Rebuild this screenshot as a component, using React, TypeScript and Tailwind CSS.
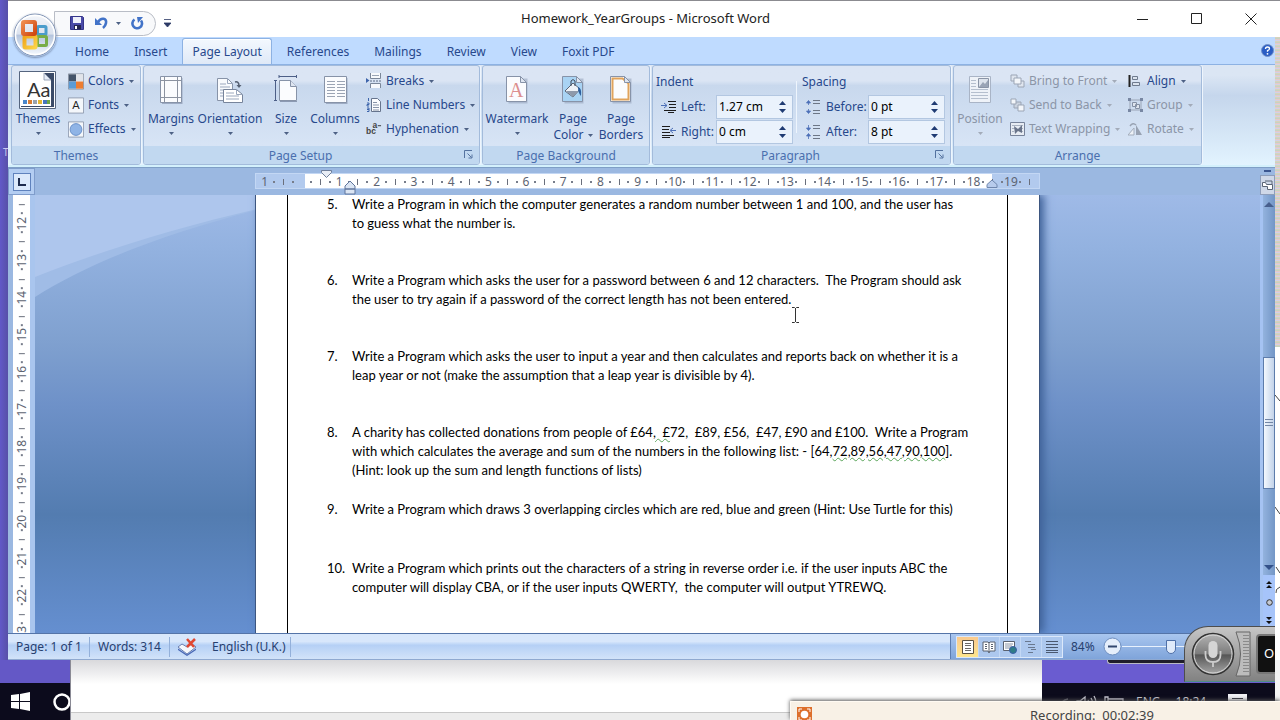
import type { ReactNode } from "react";

type Icon = ReactNode;

/* ---------- small drawings ---------- */

const Caret = ({ muted = false }: { muted?: boolean }) => (
  <svg width="5" height="3" viewBox="0 0 5 3" className="shrink-0">
    <path d="M0 0h5L2.5 3z" fill={muted ? "#a3abb9" : "#4d6185"} />
  </svg>
);

const OfficeLogo = () => (
  <svg width="44" height="44" viewBox="0 0 44 44">
    <defs>
      <linearGradient id="orb" x1="0" y1="0" x2="0" y2="1">
        <stop offset="0" stopColor="#f4f6fa" />
        <stop offset="0.48" stopColor="#dbe2ee" />
        <stop offset="0.5" stopColor="#b4c4dd" />
        <stop offset="1" stopColor="#f7fbff" />
      </linearGradient>
      <linearGradient id="orange" x1="0" y1="0" x2="1" y2="1">
        <stop offset="0" stopColor="#ee8a4c" />
        <stop offset="1" stopColor="#cf4712" />
      </linearGradient>
      <linearGradient id="yellow" x1="0" y1="0" x2="1" y2="1">
        <stop offset="0" stopColor="#f0a51a" />
        <stop offset="1" stopColor="#fbd348" />
      </linearGradient>
    </defs>
    <circle cx="22" cy="22" r="21" fill="url(#orb)" stroke="#7f92b3" />
    <circle cx="22" cy="22" r="19.5" fill="none" stroke="#fff" strokeWidth="1.5" />
    <g fill="none" strokeLinejoin="round">
      <rect x="24.5" y="13.500" width="8.500" height="8" rx="1" stroke="#4a9ccb" strokeWidth="3" />
      <rect x="24.500" y="23.500" width="9" height="9" rx="1" stroke="#78ad48" strokeWidth="3" />
      <rect x="11.500" y="23.500" width="11" height="11" rx="1" stroke="url(#yellow)" strokeWidth="4" />
      <rect x="10" y="9" width="12" height="12" rx="1" stroke="url(#orange)" strokeWidth="4" />
    </g>
  </svg>
);

const SaveIcon = () => (
  <svg width="14" height="14" viewBox="0 0 14 14">
    <path d="M.5.5h12l1 1v12H.5z" fill="#4a4ba8" stroke="#34358a" />
    <path d="M3 1h8v6H3z" fill="#eef0fb" />
    <path d="M4 9h7v4.500H4z" fill="#23244f" />
    <path d="M5 10h2v3H5z" fill="#fff" />
  </svg>
);

const UndoIcon = () => (
  <svg width="13" height="14" viewBox="0 0 13 14">
    <path d="M3 6C6 1 12 2 11 7q-.5 3-3 5" fill="none" stroke="#4273c8" strokeWidth="2.600" />
    <path d="M0 2v7h7z" fill="#4273c8" />
  </svg>
);

const RedoIcon = () => (
  <svg width="13" height="13" viewBox="0 0 13 13">
    <path d="M3.500 2.500a4.800 4.800 0 1 0 6.500 1" fill="none" stroke="#4273c8" strokeWidth="2.600" />
    <path d="M6 0h6L7 6z" fill="#4273c8" />
  </svg>
);

const Sheet = ({ fill = "#fbfcfe", children }: { fill?: string; children?: ReactNode }) => (
  <svg width="24" height="30" viewBox="0 0 24 30">
    <path d="M3.500 3.500h19v25h-19z" fill="#8593ad" opacity=".45" />
    <path d="M1.500 1.500h14l6 6v19h-20z" fill={fill} stroke="#8793a8" />
    {children}
    <path d="M15.500 1.500v6h6z" fill="#dfe6f1" stroke="#8793a8" />
  </svg>
);

const ThemesIcon = () => (
  <svg width="38" height="38" viewBox="0 0 38 38">
    <path d="M.5.5h36v37H.5z" fill="#fff" stroke="#55657f" />
    <path d="M25 2h10v34H2v-1h30V9z" fill="#3b4b68" />
    <path d="M25 2v7h7z" fill="#e6edf7" stroke="#8793a8" strokeWidth=".8" />
    <text x="8" y="26" fontSize="20" fontFamily="Lato, sans-serif" fill="#333">
      Aa
    </text>
    <path d="M4 29h4v4H4z" fill="#4b86c9" />
    <path d="M9 29h4v4H9z" fill="#d97d33" />
    <path d="M14 29h4v4h-4z" fill="#9aa3ae" />
    <path d="M19 29h4v4h-4z" fill="#e5b733" />
    <path d="M24 29h4v4h-4z" fill="#4775bd" />
    <path d="M28 29h3v4h-3z" fill="#6ca546" />
  </svg>
);

const ColorsIcon = () => (
  <svg width="19" height="19" viewBox="0 0 19 19">
    <path d="M.5.5h18v18H.5z" fill="#fff" stroke="#7d8898" />
    <path d="M1 1h8.500v8.500H1z" fill="#44546a" />
    <path d="M9.500 1H18v8.500H9.500z" fill="#e1e4ea" />
    <path d="M1 9.500h8.500V18H1z" fill="#5b9bd5" />
    <path d="M9.500 9.500H18V18H9.500z" fill="#ed7d31" />
  </svg>
);

const FontsIcon = () => (
  <svg width="19" height="19" viewBox="0 0 19 19">
    <path d="M.5.5h18v18H.5z" fill="#f4f7fb" stroke="#8793a8" />
    <text x="5" y="14" fontSize="13" fontFamily="Lato, sans-serif" fill="#222">
      A
    </text>
  </svg>
);

const EffectsIcon = () => (
  <svg width="19" height="19" viewBox="0 0 19 19">
    <path d="M.5.5h18v18H.5z" fill="#f4f7fb" stroke="#8793a8" />
    <circle cx="9.500" cy="9.500" r="7" fill="#8fb4e6" stroke="#5f88c4" />
  </svg>
);

const MarginsIcon = () => (
  <svg width="24" height="30" viewBox="0 0 24 30">
    <path d="M3 3h20.500v26H3z" fill="#7d8ba5" opacity=".6" />
    <path d="M1.500 1.500h21v26h-21z" fill="#fbfcfe" stroke="#8793a8" />
    <path d="M5.500 2v25M18.500 2v25M2 5.500h20M2 22.500h20" stroke="#8c93a0" />
  </svg>
);

const OrientationIcon = () => (
  <svg width="28" height="30" viewBox="0 0 28 30">
    <path d="M1.500 3.500h10l5 5v17h-15z" fill="#f8fafd" stroke="#8793a8" />
    <path d="M11.500 3.500v5h5M4 9h6M4 12h10M4 15h4M4 18h4M4 21h4" fill="none" stroke="#9aa7bd" />
    <path d="M19 7q4-1 4 4" fill="none" stroke="#556073" strokeWidth="1.500" />
    <path d="M20.500 10h5L23 13z" fill="#556073" />
    <path d="M7.500 14.500h13l6 5v8h-19z" fill="#fff" stroke="#77849b" />
    <path d="M20.500 14.500v5h6M10 18h8M10 21h13M10 24h13" fill="none" stroke="#9aa7bd" />
  </svg>
);

const SizeIcon = () => (
  <svg width="24" height="30" viewBox="0 0 24 30">
    <path d="M5 1.500h18M5 0v3M22.500 0v3M1.500 5v21M0 5.500h3M0 25.500h3" stroke="#4d5f87" />
    <path d="M5.500 5.500h11l6 6v14h-17z" fill="#fbfcfe" stroke="#8793a8" />
    <path d="M16.500 5.500v6h6" fill="#dfe6f1" stroke="#8793a8" />
    <path d="M6 26.500h17" stroke="#8b99b2" />
  </svg>
);

const ColumnsIcon = () => (
  <svg width="25" height="30" viewBox="0 0 25 30">
    <path d="M3 3h21.500v26H3z" fill="#7d8ba5" opacity=".6" />
    <path d="M1.500 1.500h22v26h-22z" fill="#fbfcfe" stroke="#8793a8" />
    <path
      d="M4 6.500h8M4 9.500h8M4 12.500h8M4 15.500h8M4 18.500h8M4 21.500h8M14 6.500h8M14 9.500h8M14 12.500h8M14 15.500h8M14 18.500h8M14 21.500h8"
      stroke="#9ba4b4"
    />
  </svg>
);

const BreaksIcon = () => (
  <svg width="16" height="16" viewBox="0 0 16 16">
    <path d="M4.500 0v5.500h10V0M4.500 15v-4.500h10V15" fill="#f7f9fc" stroke="#7b8799" />
    <path d="M6 2.500h7" stroke="#9aa5b5" />
    <path d="M4 8h11" stroke="#5a6a85" strokeDasharray="2 1" />
    <path d="M0 5l3.500 2.500L0 10z" fill="#3d64ab" />
  </svg>
);

const LineNumbersIcon = () => (
  <svg width="16" height="16" viewBox="0 0 16 16">
    <path d="M5.500 1.500h6l3 3v10h-9z" fill="#fbfcfe" stroke="#66748d" />
    <path d="M7 5.500h4M7 8h6M7 10.500h6M7 13h6" stroke="#8793a8" />
    <path d="M2.500 1v3M1 6h2v1.500H1V9h2M1 11h2v3.500H1M1 12.500h2" fill="none" stroke="#3d64ab" />
  </svg>
);

/* "bc" with a raised "a" and a hyphen, one run of text on two baselines */
const HyphenIcon = () => (
  <svg width="17" height="16" viewBox="0 0 17 16">
    <text x="0" y="13" fontSize="9" fontWeight="700" fontFamily="Liberation Sans, sans-serif" fill="#444">
      bc
      <tspan x="7" y="7">
        a
      </tspan>
    </text>
    <path d="M12.500 4.500h3.500" stroke="#333" />
  </svg>
);

const PositionIcon = () => (
  <svg width="24" height="30" viewBox="0 0 24 30">
    <path d="M1.500 1.500h21v26h-21z" fill="#eef2f8" stroke="#a9b4c6" />
    <path d="M3 5.500h5M3 8.500h5M3 11.500h5M3 14.500h17M3 17.500h17M3 20.500h17M3 23.500h17" stroke="#b5bfce" />
    <path d="M10.500 3.500h10v9h-10z" fill="#dde3ec" stroke="#8a94a6" />
    <path d="M11 12l4-5 2 2 3-4v7z" fill="#9aa4b5" />
  </svg>
);

const FrontIcon = () => (
  <svg width="15" height="14" viewBox="0 0 15 14" fill="#dfe5ee" stroke="#9ba5b5">
    <path d="M1 1h6v6H1zM8 7h6v6H8z" />
    <path d="M4 4h7v6H4z" fill="#f3f6fa" />
  </svg>
);

const BackIcon = () => (
  <svg width="15" height="14" viewBox="0 0 15 14" stroke="#9ba5b5">
    <path d="M4 4h7v6H4z" fill="#cbd3df" />
    <path d="M1 1h5v5H1zM8 7h6v6H8z" fill="#f3f6fa" />
  </svg>
);

const WrapIcon = () => (
  <svg width="15" height="14" viewBox="0 0 15 14">
    <path d="M.5.500h14v13H.5z" fill="#e7ecf3" stroke="#77839a" />
    <path d="M2 3.500h11M2 6.500h3M10 6.500h3M2 9.500h2M11 9.500h2" stroke="#a9b2c1" />
    <path d="M4 4l4 3 4-4v8l-4-2-3 3z" fill="#69748a" />
  </svg>
);

const AlignIcon = () => (
  <svg width="14" height="14" viewBox="0 0 14 14">
    <path d="M1.500 1v12" stroke="#222" strokeWidth="2" />
    <path d="M4.500 2.500h5v3h-5zM4.500 8.500h7v3h-7z" fill="#dbe3ee" stroke="#6f7b8e" />
  </svg>
);

const GroupIcon = () => (
  <svg width="15" height="14" viewBox="0 0 15 14">
    <path d="M2 2h11v10H2z" fill="none" stroke="#9aa4b5" />
    <path d="M4.500 4.500h4v4h-4zM7.500 6.500h4v4h-4z" fill="#dfe5ee" stroke="#8490a4" />
    <path d="M0 0h3v3H0zM12 0h3v3h-3zM0 11h3v3H0zM12 11h3v3h-3z" fill="#7887a3" />
  </svg>
);

const RotateIcon = () => (
  <svg width="15" height="14" viewBox="0 0 15 14">
    <path d="M8 3v10h6z" fill="#98a2b2" />
    <path d="M6 6v7H0z" fill="#eef2f7" stroke="#a3adbc" />
    <path d="M2 4q3-4 6-1" fill="none" stroke="#98a2b2" strokeWidth="1.500" />
  </svg>
);

const IndentIcon = ({ right = false }: { right?: boolean }) => (
  <svg width="16" height="14" viewBox="0 0 16 14">
    {right ? (
      <>
        <path d="M1 1.500h8M1 4.500h7M1 7.500h8M1 10.500h12M1 12.500h8" stroke="#1d1d1d" />
        <path d="M15 5.500h-5M12 3l-3 2.500L12 8" fill="none" stroke="#4d70b8" />
      </>
    ) : (
      <>
        <path d="M7 1.500h8M8 4.500h7M8 7.500h7M3 10.500h12M7 12.500h6" stroke="#1d1d1d" />
        <path d="M0 5.500h6M3 3l3 2.500L3 8" fill="none" stroke="#4d70b8" />
      </>
    )}
  </svg>
);

const SpacingIcon = ({ after = false }: { after?: boolean }) => (
  <svg width="15" height="16" viewBox="0 0 15 16">
    <path d="M7 1.500h7M7 4.500h7M7 11.500h7M7 14.500h7" stroke="#6c7686" />
    {after ? (
      <path d="M2.500 1v3M2.500 15v-3M.5 4h4l-2 2.500zM.5 12h4l-2-2.500z" fill="#4d70b8" stroke="#4d70b8" strokeWidth=".8" />
    ) : (
      <path d="M2.500 6V4M2.500 10v2M.5 4h4l-2-2.500zM.5 12h4l-2 2.500z" fill="#4d70b8" stroke="#4d70b8" strokeWidth=".8" />
    )}
  </svg>
);

/* ---------- ribbon parts ---------- */

interface GroupProps {
  title: string;
  className: string;
  launcher?: boolean;
  children: ReactNode;
}

const RibbonGroup = ({ title, className, launcher, children }: GroupProps) => (
  <section
    className={`${className} flex shrink-0 flex-col rounded-[3px] border border-[#a3bbdb] bg-linear-to-b from-[#dbe5f4] from-15% via-[#c8d8ed] via-20% to-[#dce8f8] shadow-[1px_0_0_#eef5fd]`}
  >
    <div className="flex h-20 pl-px pt-[3px]">{children}</div>
    <div
      className={`relative flex h-[18px] items-center justify-center rounded-b-[2px] bg-[#c1d8f0] pt-[2px] text-[#4a6fae] ${launcher ? "pr-[22px]" : ""}`}
    >
      <h2>{title}</h2>
      {launcher && (
        <button aria-label={`${title} options`} className="absolute right-[6px] top-1">
          <svg width="9" height="9" viewBox="0 0 9 9" fill="none" stroke="#54729f">
            <path d="M.5 8V.5H8M3.500 3.500l4 4M8 4.500V8H4.500" />
          </svg>
        </button>
      )}
    </div>
  </section>
);

interface BigProps {
  icon: Icon;
  lines: string[];
  className: string;
  muted?: boolean;
  caret?: boolean;
}

const BigButton = ({ icon, lines, className, muted, caret = true }: BigProps) => (
  <button className={`${className} flex h-[76px] shrink-0 flex-col items-center leading-4 ${muted ? "text-[#8b95a7]" : ""}`}>
    <span className="flex h-[42px] items-center">{icon}</span>
    {lines.map((line, i) => (
      <span key={line} className="flex items-center gap-1 whitespace-nowrap">
        {line}
        {caret && i > 0 && <Caret />}
      </span>
    ))}
    {lines.length === 1 && (
      <span className="flex h-3 items-center">
        <Caret muted={muted} />
      </span>
    )}
  </button>
);

const SmallButton = ({ icon, label, muted }: { icon: Icon; label: string; muted?: boolean }) => (
  <button className={`flex h-6 items-center gap-1 whitespace-nowrap ${muted ? "text-[#8b95a7]" : ""}`}>
    <span className="flex w-4 shrink-0 justify-center">{icon}</span>
    {label}
    <span className="pl-px">
      <Caret muted={muted} />
    </span>
  </button>
);

const Spinner = ({ id, icon, label, value, wide }: { id: string; icon: Icon; label: string; value: string; wide?: boolean }) => (
  <div className="flex h-[25px] items-center">
    <span className="w-5">{icon}</span>
    <label htmlFor={id} className={wide ? "w-[42px]" : "w-[35px]"}>
      {label}
    </label>
    <span className="flex h-6 w-[77px] items-center border border-[#b3c7e1] bg-[#eaf2fc] pr-[6px]">
      <input id={id} defaultValue={value} className="min-w-0 flex-1 bg-transparent pl-[2px] text-black outline-none" />
      <span className="flex flex-col gap-1">
        <button aria-label={`Increase ${label}`}>
          <svg width="7" height="4" viewBox="0 0 7 4" className="block">
            <path d="M0 4h7L3.500 0z" fill="#1f3b73" />
          </svg>
        </button>
        <button aria-label={`Decrease ${label}`}>
          <svg width="7" height="4" viewBox="0 0 7 4" className="block">
            <path d="M0 0h7L3.500 4z" fill="#1f3b73" />
          </svg>
        </button>
      </span>
    </span>
  </div>
);

/* ---------- rulers ---------- */

const mark = (n: number, offset: number) => {
  const q = ((n % 4) + 4) % 4;
  if (q === 0) return n === 0 ? "" : String(Math.abs(n) / 4 + offset);
  return q === 2 ? "|" : "·";
};

const horizontalMarks = Array.from({ length: 83 }, (_, i) => mark(i - 4, 0));
const verticalMarks = Array.from({ length: 47 }, (_, i) => (i === 2 ? "12" : mark(i - 2, 12)));

const Mark = ({ value }: { value: string }) =>
  value === "|" ? (
    <span className="h-[6px] w-px bg-[#6a6f7c]" />
  ) : value === "·" ? (
    <span className="size-[2px] bg-[#777d8b]" />
  ) : (
    <span>{value}</span>
  );

/* ---------- document ---------- */

const Squiggle = ({ children }: { children: string }) => (
  <span className="underline decoration-[#5aa55a] decoration-wavy decoration-1 underline-offset-1">{children}</span>
);

const questions: { no: string; gap: string; lines: ReactNode[] }[] = [
  {
    no: "5.",
    gap: "mb-[38px]",
    lines: [
      "Write a Program in which the computer generates a random number between 1 and 100, and the user has",
      "to guess what the number is.",
    ],
  },
  {
    no: "6.",
    gap: "mb-[38px]",
    lines: [
      "Write a Program which asks the user for a password between 6 and 12 characters.  The Program should ask",
      "the user to try again if a password of the correct length has not been entered.",
    ],
  },
  {
    no: "7.",
    gap: "mb-[38px]",
    lines: [
      "Write a Program which asks the user to input a year and then calculates and reports back on whether it is a",
      "leap year or not (make the assumption that a leap year is divisible by 4).",
    ],
  },
  {
    no: "8.",
    gap: "mb-5",
    lines: [
      <>
        A charity has collected donations from people of £64<Squiggle>{",  £"}</Squiggle>
        {"72,  £89, £56,  £47, £90 and £100.  Write a Program"}
      </>,
      <>
        with which calculates the average and sum of the numbers in the following list: - [64,
        <Squiggle>72,89,56,47,90,100</Squiggle>].
      </>,
      "(Hint: look up the sum and length functions of lists)",
    ],
  },
  {
    no: "9.",
    gap: "mb-10",
    lines: ["Write a Program which draws 3 overlapping circles which are red, blue and green (Hint: Use Turtle for this)"],
  },
  {
    no: "10.",
    gap: "",
    lines: [
      "Write a Program which prints out the characters of a string in reverse order i.e. if the user inputs ABC the",
      "computer will display CBA, or if the user inputs QWERTY,  the computer will output YTREWQ.",
    ],
  },
];

const tabs = ["Home", "Insert", "Page Layout", "References", "Mailings", "Review", "View", "Foxit PDF"];

/* ---------- window sections ---------- */

const TitleBar = () => (
  <header className="relative flex h-[37px] shrink-0 items-center border-t border-[#8b8b90] bg-white">
    <div className="absolute left-[5px] top-3 z-10">
      <button aria-label="Office button" className="block rounded-full shadow-[0_1px_2px_#7b8eae]">
        <OfficeLogo />
      </button>
    </div>
    <div className="mt-2 ml-[46px] flex h-[25px] w-[102px] items-center rounded-r-full border border-[#b9bdc6] bg-[#f8f9fb] pl-[15px]">
      <button aria-label="Save">
        <SaveIcon />
      </button>
      <button aria-label="Undo" className="ml-[11px] flex items-center gap-2">
        <UndoIcon />
        <Caret />
      </button>
      <button aria-label="Repeat" className="ml-[10px]">
        <RedoIcon />
      </button>
    </div>
    <button aria-label="Customize toolbar" className="mt-2 ml-2">
      <svg width="7" height="8" viewBox="0 0 7 8">
        <path d="M0 .5h7M0 4h7L3.500 8z" fill="#2c3a66" stroke="#2c3a66" strokeWidth=".8" />
      </svg>
    </button>
    <h1 className="flex-1 pl-[350px] text-[13px] text-[#222]">Homework_YearGroups - Microsoft Word</h1>
    <div className="flex items-center gap-[43px] pr-[18px]">
      <button aria-label="Minimize" className="pb-px">
        <svg width="11" height="12" viewBox="0 0 11 12">
          <path d="M0 6.500h11" stroke="#222" />
        </svg>
      </button>
      <button aria-label="Maximize">
        <svg width="11" height="12" viewBox="0 0 11 12">
          <path d="M.5.500h10v10H.5z" fill="none" stroke="#222" />
        </svg>
      </button>
      <button aria-label="Close">
        <svg width="12" height="12" viewBox="0 0 12 12">
          <path d="M.5.500l11 11M11.500.500l-11 11" stroke="#222" />
        </svg>
      </button>
    </div>
  </header>
);

const TabStrip = () => (
  <nav className="flex h-[27px] shrink-0 items-end gap-[5px] bg-[#bfdbff] pl-[57px]">
    {tabs.map((tab) => (
      <a
        key={tab}
        href="#"
        aria-current={tab === "Page Layout" ? "page" : undefined}
        className={
          tab === "Page Layout"
            ? "flex h-[26px] items-center rounded-t-[3px] border border-b-0 border-[#8db2e3] bg-linear-to-b from-[#f3f8fe] to-[#dfe9f7] px-[9px] shadow-[inset_0_1px_0_#fff]"
            : "flex h-[26px] items-center px-[10px] pt-px"
        }
      >
        {tab}
      </a>
    ))}
    <button aria-label="Help" className="mr-px mb-[7px] ml-auto">
      <svg width="13" height="13" viewBox="0 0 13 13">
        <circle cx="6.500" cy="6.500" r="6" fill="#2a5dc4" stroke="#7290c8" />
        <path d="M4.500 5q0-2 2-2t2 1.700q0 1-2 2v1" fill="none" stroke="#fff" strokeWidth="1.300" />
        <circle cx="6.500" cy="9.800" r=".9" fill="#fff" />
      </svg>
    </button>
  </nav>
);

const Ribbon = () => (
  <div className="flex h-[104px] shrink-0 items-start gap-[2px] border-t border-b border-t-[#8db2e3] border-b-[#7f9fc6] bg-linear-to-b from-[#dbe6f4] from-10% via-[#c5d6ec] via-30% to-[#e3f4ff] pl-[3px] shadow-[inset_0_-2px_0_#d3f0fc]">
    <RibbonGroup title="Themes" className="w-[130px]">
      <BigButton className="w-[50px]" icon={<ThemesIcon />} lines={["Themes"]} />
      <div className="pl-[5px]">
        <SmallButton icon={<ColorsIcon />} label="Colors" />
        <SmallButton icon={<FontsIcon />} label="Fonts" />
        <SmallButton icon={<EffectsIcon />} label="Effects" />
      </div>
    </RibbonGroup>

    <RibbonGroup title="Page Setup" className="w-[337px]" launcher>
      <BigButton className="w-[52px]" icon={<MarginsIcon />} lines={["Margins"]} />
      <BigButton className="w-[66px]" icon={<OrientationIcon />} lines={["Orientation"]} />
      <BigButton className="w-[46px]" icon={<SizeIcon />} lines={["Size"]} />
      <BigButton className="w-[52px]" icon={<ColumnsIcon />} lines={["Columns"]} />
      <div className="pl-[5px]">
        <SmallButton icon={<BreaksIcon />} label="Breaks" />
        <SmallButton icon={<LineNumbersIcon />} label="Line Numbers" />
        <SmallButton icon={<HyphenIcon />} label="Hyphenation" />
      </div>
    </RibbonGroup>

    <RibbonGroup title="Page Background" className="w-[168px]">
      <BigButton
        className="w-[66px]"
        lines={["Watermark"]}
        icon={
          <Sheet>
            <text x="4" y="22" fontSize="20" fontFamily="Liberation Serif, serif" fill="#dc8f8f">
              A
            </text>
          </Sheet>
        }
      />
      <BigButton
        className="w-[46px]"
        lines={["Page", "Color"]}
        icon={
          <Sheet fill="#a9d3f3">
            <path d="M4 16l8-8 7 6-7 8z" fill="#eef2f7" stroke="#5a6475" />
            <path d="M5 16h13l-6 6z" fill="#8d99ab" />
            <path d="M10 11V6q2-3 4 0v5" fill="none" stroke="#3f4858" />
            <path d="M17 12q4 1 3 9-3-3-3-9z" fill="#2c5f9e" />
          </Sheet>
        }
      />
      <BigButton
        className="w-[50px]"
        lines={["Page", "Borders"]}
        caret={false}
        icon={
          <Sheet>
            <path d="M3.500 3.500h10l6 5v16h-16z" fill="none" stroke="#e0a35c" strokeWidth="2" />
          </Sheet>
        }
      />
    </RibbonGroup>

    <RibbonGroup title="Paragraph" className="w-[299px]" launcher>
      <div className="w-[142px] pl-[2px] pt-1">
        <h3 className="h-[21px]">Indent</h3>
        <div className="pl-[5px]">
          <Spinner id="indent-left" icon={<IndentIcon />} label="Left:" value="1.27 cm" />
          <Spinner id="indent-right" icon={<IndentIcon right />} label="Right:" value="0 cm" />
        </div>
      </div>
      <div className="mt-3 h-[52px] w-px bg-[#eef5fd]" />
      <div className="pl-[5px] pt-1">
        <h3 className="h-[21px]">Spacing</h3>
        <div className="pl-1">
          <Spinner id="space-before" icon={<SpacingIcon />} label="Before:" value="0 pt" wide />
          <Spinner id="space-after" icon={<SpacingIcon after />} label="After:" value="8 pt" wide />
        </div>
      </div>
    </RibbonGroup>

    <RibbonGroup title="Arrange" className="w-[249px]">
      <BigButton className="w-[50px]" icon={<PositionIcon />} lines={["Position"]} muted />
      <div className="w-[122px] pl-1">
        <SmallButton icon={<FrontIcon />} label="Bring to Front" muted />
        <SmallButton icon={<BackIcon />} label="Send to Back" muted />
        <SmallButton icon={<WrapIcon />} label="Text Wrapping" muted />
      </div>
      <div>
        <SmallButton icon={<AlignIcon />} label="Align" />
        <SmallButton icon={<GroupIcon />} label="Group" muted />
        <SmallButton icon={<RotateIcon />} label="Rotate" muted />
      </div>
    </RibbonGroup>
  </div>
);

const RulerRow = () => (
  <div className="flex h-[27px] shrink-0 bg-[#9bb8e1]">
    <div className="flex w-[27px] items-center justify-center border border-[#7f9ccb] bg-[#b3cdf2]">
      <button aria-label="Left tab" className="flex size-[18px] items-center justify-center border border-[#5f82bd] bg-[#dce9fb]">
        <svg width="8" height="8" viewBox="0 0 8 8">
          <path d="M1 0v7h7" fill="none" stroke="#1e2b4d" strokeWidth="2" />
        </svg>
      </button>
    </div>
    <div className="flex flex-1 justify-center">
      <div className="relative mt-[5px] flex h-4 w-[785px] border border-[#c3d7f4] bg-[#b2caee] text-[#5d6472]">
        <div className="absolute inset-y-0 left-[49px] w-[687px] bg-white" />
        <div className="relative flex min-w-0 flex-1 pt-px pr-[5px] pl-1">
          {horizontalMarks.map((value, i) => (
            <span key={i} className="flex w-0 flex-1 items-center justify-center leading-none">
              <Mark value={value} />
            </span>
          ))}
        </div>
        <svg className="absolute -top-1 left-[65px]" width="11" height="8" viewBox="0 0 11 8">
          <path d="M.5.500h10v2l-5 5-5-5z" fill="#e8edf5" stroke="#6f7f9b" />
        </svg>
        <svg className="absolute top-[6px] left-[88px]" width="12" height="15" viewBox="0 0 12 15">
          <path d="M1 6l5-5 5 5v3H1zM1 9h10v5H1z" fill="#dbe5f3" stroke="#5f759c" />
        </svg>
        <svg className="absolute top-[5px] left-[730px]" width="12" height="9" viewBox="0 0 12 9">
          <path d="M1 5.500L6 1l5 4.500v3H1z" fill="#b7cbec" stroke="#6f86ad" />
        </svg>
      </div>
    </div>
    <div className="flex w-[15px] flex-col justify-between">
      <span className="mx-1 mt-[2px] h-[2px] bg-[#3b5690]" />
      <button aria-label="View ruler" className="flex h-[20px] items-center justify-center border border-[#8e9ebb] bg-[#cfd8e8]">
        <svg width="11" height="11" viewBox="0 0 11 11">
          <path d="M.5 2.500h3l1 2h6v5h-5v-3h-5z" fill="#fff" stroke="#5a6475" />
          <path d="M3 1h7v3" fill="none" stroke="#5a6475" />
        </svg>
      </button>
    </div>
  </div>
);

const ScrollBar = () => (
  <div className="flex w-[15px] shrink-0 flex-col border-l-[3px] border-[#a5c3f2] bg-linear-to-r from-[#93b3de] to-[#7396c6]">
    <button aria-label="Scroll up" className="flex h-[18px] items-center justify-center">
      <svg width="10" height="5" viewBox="0 0 10 5">
        <path d="M0 5h10L5 0z" fill="#475f8e" />
      </svg>
    </button>
    <div className="flex-[145]" />
    <div className="flex flex-[131] items-center justify-center border border-[#5d7cab] bg-linear-to-r from-[#f3f8fe] to-[#c3d3e9]">
      <svg width="8" height="8" viewBox="0 0 8 8">
        <path d="M0 .5h8M0 3.500h8M0 6.500h8" stroke="#7386a5" />
      </svg>
    </div>
    <div className="flex-[71]" />
    <button aria-label="Scroll down" className="flex h-4 items-center justify-center">
      <svg width="10" height="5" viewBox="0 0 10 5">
        <path d="M0 0h10L5 5z" fill="#33518a" />
      </svg>
    </button>
    <div className="flex h-[58px] flex-col items-center gap-[11px] bg-[#a6c4fa] pt-[5px]">
      <svg width="6" height="8" viewBox="0 0 6 8" className="shrink-0">
        <path d="M0 4h6L3 1zM0 8h6L3 5z" fill="#111" />
      </svg>
      <svg width="7" height="7" viewBox="0 0 7 7" className="shrink-0">
        <circle cx="3.500" cy="3.500" r="2.800" fill="#c5c9d2" stroke="#333" />
      </svg>
      <svg width="6" height="8" viewBox="0 0 6 8" className="shrink-0">
        <path d="M0 0h6L3 3zM0 4h6L3 7z" fill="#111" />
      </svg>
    </div>
  </div>
);

const Workspace = () => (
  <div className="relative flex min-h-0 flex-1">
    <div className="flex w-[27px] shrink-0 overflow-hidden border-r-[5px] border-[#a9c5ee] bg-[#9bb8e1] pl-[5px]">
      <div className="flex w-[17px] shrink-0 bg-white text-[#5d6472]">
        <div className="mt-[5px] flex h-full w-full flex-col">
          {verticalMarks.map((value, i) => (
            <span key={i} className="flex h-0 flex-1 -rotate-90 items-center justify-center leading-none">
              <Mark value={value} />
            </span>
          ))}
        </div>
      </div>
    </div>

    <main className="relative flex min-w-0 flex-1 justify-center overflow-hidden bg-[linear-gradient(#9fbae7,#93b2e0_12%,#7fa0cf_34%,#6e91c8_48%,#537cb0_73%,#658fd0)]">
      <svg className="absolute top-0 left-0" width="222" height="102" viewBox="0 0 222 102">
        <path d="M0 0h222v15C140 36 60 64 0 102z" fill="#a0bce6" />
        <path d="M0 0h222v14C140 33 60 58 0 82z" fill="#aec6ed" />
      </svg>
      <article className="relative w-[785px] border-r border-l border-[#3d5680] bg-white shadow-[4px_0_8px_#40639a]">
        <div className="ml-[31px] h-full w-[721px] border-x border-black">
          <ol className="pl-[39px] font-['Lato',sans-serif] text-[13px] leading-[19px] text-black [font-variant-ligatures:none]">
            {questions.map(({ no, gap, lines }) => (
              <li key={no} className={`${gap} flex`}>
                <span className="w-[25px] shrink-0">{no}</span>
                <p className="whitespace-pre">
                  {lines.map((line, i) => (
                    <span key={i} className="block">
                      {line}
                    </span>
                  ))}
                </p>
              </li>
            ))}
          </ol>
        </div>
        <svg className="absolute top-[112px] left-[535px]" width="9" height="16" viewBox="0 0 9 16">
          <path d="M1 .5h2.500l1 1 1-1H8M4.500 1v14M1 15.500h2.500l1-1 1 1H8" fill="none" stroke="#333" />
        </svg>
      </article>
    </main>
    <ScrollBar />
  </div>
);

const viewButtons: { label: string; icon: Icon }[] = [
  {
    label: "Print layout",
    icon: (
      <>
        <path d="M1.500.500h11v13h-11z" fill="#fff" stroke="#5a5142" />
        <path d="M4 3.500h6M4 5.500h6M4 8.500h6M4 10.500h6" stroke="#6a6a6a" />
      </>
    ),
  },
  {
    label: "Full screen reading",
    icon: (
      <>
        <path d="M1 2h5l1 1 1-1h5v9H8l-1 2-1-2H1z" fill="#fff" stroke="#59616f" />
        <path d="M7 3v9M3 4.500h2M3 6.500h2M3 8.500h2M9 4.500h2M9 6.500h2M9 8.500h2" stroke="#59616f" />
      </>
    ),
  },
  {
    label: "Web layout",
    icon: (
      <>
        <path d="M.5 1.500h11v9H.5z" fill="#fff" stroke="#59616f" />
        <path d="M2 4h8M2 6h7M2 8h5" stroke="#8b95a5" />
        <circle cx="10" cy="10" r="3.500" fill="#2f7c86" stroke="#3a5ea8" />
      </>
    ),
  },
  { label: "Outline", icon: <path d="M1 1.500h6M4 4.500h7M4 7.500h7M7 9.500h5M4 12.500h5" stroke="#69788f" /> },
  { label: "Draft", icon: <path d="M1 1.500h12M1 4.500h12M1 7.500h12M1 10.500h12M1 12.500h12" stroke="#4a586f" /> },
];

const StatusBar = () => (
  <footer className="flex h-[27px] shrink-0 items-center border-t border-b border-t-[#5474a8] border-b-[#8fa9d0] bg-linear-to-b from-[#d8e7fb] from-30% via-[#b5d0f5] via-45% to-[#d2e3f9] text-[#27406f]">
    <span className="flex h-5 w-[82px] items-center border-r border-[#93b0da] pl-2">Page: 1 of 1</span>
    <span className="flex h-5 w-20 items-center border-r border-[#93b0da] pl-2">Words: 314</span>
    <button aria-label="Proofing errors" className="ml-[7px]">
      <svg width="20" height="18" viewBox="0 0 20 18">
        <path d="M1 9l4-3 5 3 5-3 4 3-9 7z" fill="#f5f7fb" stroke="#6b7fb0" />
        <path d="M1 10.500l9 6 9-6v1.500l-9 6-9-6z" fill="#4867b4" />
        <path d="M10 1l7 8M18 1l-8 8" stroke="#e04832" strokeWidth="2.500" />
      </svg>
    </button>
    <span className="ml-[15px] flex h-5 w-[79px] items-center border-r border-[#93b0da] whitespace-nowrap">English (U.K.)</span>
    <div className="ml-auto flex h-full w-[325px] items-center border-l border-[#5c7cb0] bg-linear-to-b from-[#a9c6ef] to-[#7fa4da] pl-[5px]">
      <div className="flex border border-[#dbe8fa]">
        {viewButtons.map(({ label, icon }, i) => (
          <button
            key={label}
            aria-label={label}
            className={
              i === 0
                ? "flex h-5 w-[21px] items-center justify-center bg-linear-to-b from-[#f9c98e] to-[#fde58e]"
                : "flex h-5 w-[21px] items-center justify-center border-l border-[#c3d8f5] bg-[#adc8ee]"
            }
          >
            <svg width="14" height="14" viewBox="0 0 14 14" fill="none">
              {icon}
            </svg>
          </button>
        ))}
      </div>
      <span className="w-[31px] pl-2">84%</span>
      <button aria-label="Zoom out" className="ml-[9px] shrink-0">
        <svg width="19" height="19" viewBox="0 0 19 19">
          <circle cx="9.500" cy="9.500" r="8.500" fill="#e5eefb" stroke="#6f8fc0" />
          <path d="M5 9.500h9" stroke="#33486f" strokeWidth="2" />
        </svg>
      </button>
      <input
        type="range"
        aria-label="Zoom"
        defaultValue={49}
        className="h-5 w-[100px] appearance-none bg-[linear-gradient(#e8f1fd,#e8f1fd)] bg-[length:100%_1px] bg-center bg-no-repeat [&::-webkit-slider-thumb]:h-[14px] [&::-webkit-slider-thumb]:w-[10px] [&::-webkit-slider-thumb]:appearance-none [&::-webkit-slider-thumb]:rounded-b-[5px] [&::-webkit-slider-thumb]:border [&::-webkit-slider-thumb]:border-[#4f70a8] [&::-webkit-slider-thumb]:bg-[#dfeafa]"
      />
    </div>
  </footer>
);

const Taskbar = () => (
  <div className="flex h-[60px] shrink-0 overflow-hidden text-[#c9c9d3]">
    <div className="flex w-[70px] shrink-0 flex-col">
      <div className="h-[23px] bg-[#6458c6]" />
      <div className="flex flex-1 items-center gap-[23px] overflow-hidden bg-[#0c0b1c] pl-[11px]">
        <button aria-label="Start">
          <svg width="19" height="19" viewBox="0 0 19 19" fill="#fff">
            <path d="M0 3l8-1v7H0zM9 2l10-2v9H9zM0 10h8v7l-8-1zM9 10h10v9L9 17z" />
          </svg>
        </button>
        <button aria-label="Search" className="shrink-0">
          <svg width="18" height="18" viewBox="0 0 18 18">
            <circle cx="9" cy="9" r="7.500" fill="none" stroke="#fff" strokeWidth="2.500" />
          </svg>
        </button>
      </div>
    </div>
    <div className="min-w-0 flex-1 border-l border-[#8a8a95] bg-linear-to-b from-[#d9d9dc] to-white to-40%">
      <div className="mt-[52px] h-2 border-t border-[#c8c8c8] bg-[#ececec]" />
    </div>
    <div className="flex w-[233px] shrink-0 flex-col">
      <div className="h-[23px] bg-[#6a5cd0]">
        <div className="ml-[65px] h-1 rounded-bl-[3px] border-b border-l border-[#b9b9c6] bg-[#1f1d2b]" />
      </div>
      <div className="flex flex-1 items-center bg-[#0c0b1c] pl-[14px]">
        <svg width="70" height="16" viewBox="0 0 70 16" fill="none" stroke="#c9c9d3" strokeWidth="1.300">
          <path d="M3 14Q5 6 12 5M7 14q1-4 5-5" opacity=".45" />
          <path d="M21 7h3l5-4v12l-5-4h-3zM32 6q2 3 0 6M35 4q3 5 0 9M38 2q4 7 0 12" />
          <path d="M52 5h15v7H52zM49 3h3v5h-3z" />
        </svg>
        <span className="ml-[10px]">ENG</span>
        <span className="ml-[15px]">18:24</span>
        <svg className="ml-[22px]" width="19" height="16" viewBox="0 0 19 16">
          <path d="M0 0h19v13H6l-3 3v-3H0z" fill="#f1f1f5" />
          <path d="M4 4.500h11M4 7.500h11" stroke="#33333f" />
        </svg>
      </div>
    </div>
    <div className="w-[5px] bg-[#f4f4f4]" />
  </div>
);

const MicWidget = () => (
  <div className="absolute right-[5px] bottom-[38px] flex h-14 w-[91px] items-center overflow-hidden rounded-tl-[24px] border border-r-0 border-[#4d4d4d] border-b-[#4f8d87] bg-linear-to-b from-[#c6c6c6] to-[#828282] pl-[6px]">
    <button aria-label="Microphone" className="shrink-0">
      <svg width="44" height="44" viewBox="0 0 44 44">
        <defs>
          <linearGradient id="mic" x1="0" y1="0" x2="0" y2="1">
            <stop offset="0" stopColor="#b5b5b5" />
            <stop offset="0.5" stopColor="#7b7b7b" />
            <stop offset="0.52" stopColor="#555" />
            <stop offset="1" stopColor="#a8a8a8" />
          </linearGradient>
        </defs>
        <circle cx="22" cy="22" r="20.500" fill="url(#mic)" stroke="#333" strokeWidth="1.500" />
        <circle cx="22" cy="22" r="19" fill="none" stroke="#d8d8d8" />
        <rect x="17.500" y="9" width="9" height="17" rx="4.500" fill="#d5d5d5" />
        <path d="M14.500 19v4q0 7 7.500 7t7.500-7v-4M22 30v5" fill="none" stroke="#cdcdcd" strokeWidth="1.800" />
      </svg>
    </button>
    <svg className="shrink-0" width="16" height="46" viewBox="0 0 16 46">
      <path d="M1 1h14v44H1q9-22 0-44z" fill="#bcbcbc" stroke="#666" />
      <path
        d="M8 4.500h6M8 7.500h6M8 10.500h6M8 13.500h6M8 16.500h6M8 19.500h6M8 22.500h6M8 25.500h6M8 28.500h6M8 31.500h6M8 34.500h6M8 37.500h6M8 40.500h6"
        stroke="#8a8a8a"
      />
    </svg>
    <span className="ml-[5px] flex h-10 w-6 shrink-0 items-center rounded-[4px] border-2 border-[#777] bg-[#111] pl-[6px] text-[13px] text-white">
      O
    </span>
  </div>
);

export default function App() {
  return (
    <div className="relative flex h-screen min-h-[600px] flex-col overflow-hidden bg-[#5f55bd] font-['Noto_Sans','Open_Sans',sans-serif] text-[12px] text-[#27488c]">
      <div className="flex min-h-0 flex-1">
        <div className="w-2 shrink-0 bg-linear-to-r from-[#6259c8] to-[#5750a8] pt-[145px] pl-[3px] text-[10px] text-[#c9c6ee]">T</div>
        <div className="flex min-w-0 flex-1 flex-col">
          <TitleBar />
          <TabStrip />
          <Ribbon />
          <RulerRow />
          <Workspace />
          <StatusBar />
        </div>
        <div className="flex w-[5px] shrink-0 flex-col bg-white">
          <div className="h-[37px] border-t border-[#8b8b90]" />
          <div className="h-[310px] bg-[repeating-linear-gradient(#d9d2bd_0_1px,#c6d4c2_1px_2px,#e6c9c9_2px_3px,#d2d2e6_3px_4px)]" />
          <svg width="5" height="270" viewBox="0 0 5 270" fill="none" stroke="#444">
            <path d="M0 48l5 6M0 160l5 7M1 220l4 6M5 240q-5 2-4 6" />
          </svg>
        </div>
      </div>
      <Taskbar />
      <MicWidget />
      <div className="absolute right-0 bottom-0 left-[790px] flex h-[19px] items-start border-t border-l border-[#fffaf2] bg-[#f8f1e6] pl-[6px] shadow-[0_-1px_4px_#555]">
        <svg className="mt-[5px]" width="15" height="15" viewBox="0 0 15 15">
          <path d="M0 0h15v15H0z" fill="#dd6f2c" />
          <path d="M2 5V2h3M10 2h3v3M2 10v3h3M10 13h3v-3" fill="none" stroke="#fff" />
          <circle cx="7.500" cy="7.500" r="3.800" fill="#fff" />
        </svg>
        <p className="ml-[218px] pt-1 text-[13px] leading-[18px] whitespace-pre text-[#444]">Recording:  00:02:39</p>
      </div>
    </div>
  );
}
